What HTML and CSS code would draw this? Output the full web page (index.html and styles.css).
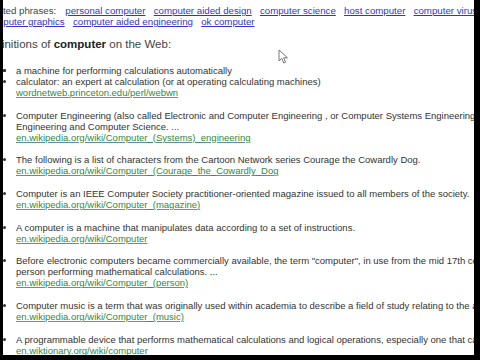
FILE: index.html
```html
<!DOCTYPE html>
<html>
<head>
<meta charset="utf-8">
<link rel="stylesheet" href="styles.css">
</head>
<body>
<div class="frame">
  <div class="content">
    <div class="related">
      <div class="line first">Related phrases:<a class="lead" href="#">personal computer</a> <a href="#">computer aided design</a> <a href="#">computer science</a> <a href="#">host computer</a> <a href="#">computer virus</a></div>
      <div class="line"><a class="lead" href="#">computer graphics</a> <a href="#">computer aided engineering</a> <a href="#">ok computer</a></div>
    </div>
    <h2 class="heading">Definitions of <b>computer</b> on the Web:</h2>
    <ul class="defs">
      <li>
        <ul class="sub">
          <li>a machine for performing calculations automatically</li>
          <li>calculator: an expert at calculation (or at operating calculating machines)</li>
        </ul>
        <a class="cite" href="#">wordnetweb.princeton.edu/perl/webwn</a>
      </li>
      <li>Computer Engineering (also called Electronic and Computer Engineering , or Computer Systems Engineering) is a discipline that combines both Electrical<br>Engineering and Computer Science. ...<br><a class="cite" href="#">en.wikipedia.org/wiki/Computer_(Systems)_engineering</a></li>
      <li>The following is a list of characters from the Cartoon Network series Courage the Cowardly Dog.<br><a class="cite" href="#">en.wikipedia.org/wiki/Computer_(Courage_the_Cowardly_Dog</a></li>
      <li>Computer is an IEEE Computer Society practitioner-oriented magazine issued to all members of the society.<br><a class="cite" href="#">en.wikipedia.org/wiki/Computer_(magazine)</a></li>
      <li>A computer is a machine that manipulates data according to a set of instructions.<br><a class="cite" href="#">en.wikipedia.org/wiki/Computer</a></li>
      <li>Before electronic computers became commercially available, the term "computer", in use from the mid 17th century, literally meant "one who computes": a<br>person performing mathematical calculations. ...<br><a class="cite" href="#">en.wikipedia.org/wiki/Computer_(person)</a></li>
      <li>Computer music is a term that was originally used within academia to describe a field of study relating to the applications of computing technology in music.<br><a class="cite" href="#">en.wikipedia.org/wiki/Computer_(music)</a></li>
      <li>A programmable device that performs mathematical calculations and logical operations, especially one that can process, store and retrieve large amounts of data.<br><a class="cite" href="#">en.wiktionary.org/wiki/computer</a></li>
    </ul>
  </div>
  <svg class="cursor" width="12" height="16" viewBox="0 0 12 16"><path d="M1 1 L1 12 L3.8 9.4 L5.8 14 L7.6 13.2 L5.7 8.8 L9.5 8.8 Z" fill="#fff" stroke="#777" stroke-width="1"/></svg>
</div>
</body>
</html>
```
FILE: styles.css
```css
html, body {
  margin: 0;
  padding: 0;
  background: #000;
}
.frame {
  position: relative;
  margin-left: 3px;
  width: 471px;
  height: 355px;
  background: #fff;
  overflow: hidden;
  font-family: "Liberation Sans", Arial, sans-serif;
  color: #333;
}
.content {
  margin-left: -16px;
  white-space: nowrap;
}
.related {
  padding-top: 5px;
  font-size: 9.7px;
  line-height: 11px;
  color: #444;
}
.related .first {
  margin-left: -4px;
}
.related a {
  color: #3434cc;
  text-decoration: underline;
  margin-left: 5.5px;
}
.related a.lead {
  margin-left: 9px;
}
.related .line:nth-child(2) a.lead {
  margin-left: -2px;
}
.heading {
  margin: 10px 0 0 -3px;
  font-size: 11.5px;
  line-height: 14px;
  font-weight: normal;
  color: #444;
}
.heading b {
  color: #222;
}
.defs {
  margin: 14px 0 0 0;
  padding-left: 29px;
  list-style: disc;
  font-size: 9.5px;
  line-height: 11px;
}
.defs > li {
  margin-bottom: 10.7px;
}
.sub {
  margin: 0;
  padding: 0;
  list-style: disc;
}
.cite {
  color: #2f8a3c;
  text-decoration: underline;
  text-decoration-color: #5a8fb0;
  line-height: 12px;
}
.cursor {
  position: absolute;
  left: 275px;
  top: 49px;
}
```
